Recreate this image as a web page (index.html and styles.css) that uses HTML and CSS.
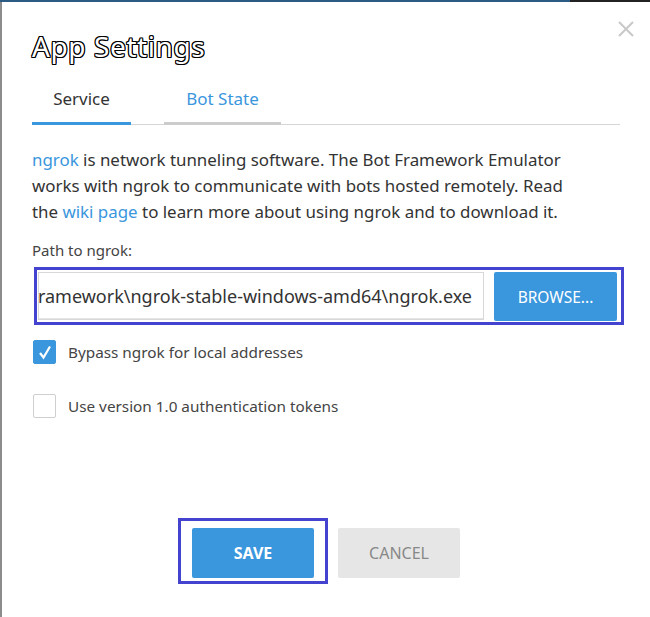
FILE: index.html
```html
<!DOCTYPE html>
<html lang="en">
<head>
    <meta charset="UTF-8">
    <meta name="viewport" content="width=device-width, initial-scale=1.0">
    <title>App Settings</title>
    <link rel="stylesheet" href="styles.css">
</head>
<body>
    <div class="topbar">
        <div class="topbar-blue"></div>
        <div class="topbar-dark"></div>
    </div>
    <div class="dialog">
        <button class="close" aria-label="Close">
            <svg width="16" height="16" viewBox="0 0 16 16">
                <path d="M1 1 L15 15 M15 1 L1 15" stroke="#c8c8c8" stroke-width="2" fill="none"/>
            </svg>
        </button>
        <h1 class="title">App Settings</h1>

        <div class="tabs">
            <div class="tab tab-active">Service</div>
            <div class="tab tab-inactive">Bot State</div>
        </div>

        <p class="intro">
            <a href="#">ngrok</a> is network tunneling software. The Bot Framework Emulator<br>
            works with ngrok to communicate with bots hosted remotely. Read<br>
            the <a href="#">wiki page</a> to learn more about using ngrok and to download it.
        </p>

        <label class="field-label">Path to ngrok:</label>
        <div class="path-row">
            <div class="path-input"><span>ramework\ngrok-stable-windows-amd64\ngrok.exe</span></div>
            <button class="btn btn-primary btn-browse">BROWSE...</button>
        </div>

        <div class="check-row">
            <span class="checkbox checked">
                <svg width="16" height="16" viewBox="0 0 16 16">
                    <path d="M3 9 L6.5 13.5 L13 2.5" stroke="#fff" stroke-width="2.2" fill="none"/>
                </svg>
            </span>
            <span class="check-label">Bypass ngrok for local addresses</span>
        </div>
        <div class="check-row">
            <span class="checkbox"></span>
            <span class="check-label">Use version 1.0 authentication tokens</span>
        </div>

        <div class="actions">
            <div class="focus-ring">
                <button class="btn btn-primary btn-save">SAVE</button>
            </div>
            <button class="btn btn-secondary">CANCEL</button>
        </div>
    </div>
</body>
</html>
```

FILE: styles.css
```css
body {
    margin: 0;
    padding: 0;
    background: #fff;
    font-family: "Noto Sans", "Open Sans", sans-serif;
    color: #333;
    width: 650px;
    height: 617px;
    overflow: hidden;
}

.topbar {
    display: flex;
    height: 2px;
}

.topbar-blue {
    width: 570px;
    background-color: #2b5a82;
}

.topbar-dark {
    flex: 1;
    background-color: #222;
}

.dialog {
    position: relative;
    height: 615px;
    border-left: 2px solid #8c8c8c;
    padding: 0 30px;
    box-sizing: border-box;
}

.close {
    position: absolute;
    top: 19px;
    right: 16px;
    background: none;
    border: none;
    padding: 0;
    width: 16px;
    height: 16px;
}

.title {
    margin: 0;
    padding-top: 26px;
    font-size: 28px;
    line-height: 36px;
    font-weight: normal;
    letter-spacing: 0.6px;
    color: #fff;
    text-shadow: -1px 0 #000, 1px 0 #000, 0 -1px #000, 0 1px #000,
        -1px -1px #000, 1px 1px #000, 1px -1px #000, -1px 1px #000;
}

.tabs {
    display: flex;
    margin-top: 14px;
    border-bottom: 1px solid #d6d6d6;
    width: 588px;
    gap: 33px;
}

.tab {
    font-size: 17px;
    line-height: 24px;
    padding: 9px 0 11px;
    text-align: center;
    border-bottom: 3px solid transparent;
    margin-bottom: -1px;
}

.tab-active {
    width: 99px;
    color: #333;
    border-bottom-color: #3a96dd;
}

.tab-inactive {
    width: 117px;
    color: #3a96dd;
    border-bottom-color: #cccccc;
}

.intro {
    margin: 22px 0 0;
    font-size: 16.9px;
    line-height: 26px;
    width: 592px;
    white-space: nowrap;
}

.intro a {
    color: #3a96dd;
    text-decoration: none;
}

.field-label {
    display: block;
    margin-top: 15px;
    font-size: 15px;
    line-height: 20px;
    color: #444;
}

.path-row {
    display: flex;
    gap: 10px;
    margin: 7px 0 0 2px;
    width: 579px;
    padding: 2px 4px 1px 1px;
    border: 3px solid #4343cf;
}

.path-input {
    width: 446px;
    height: 48px;
    border: 1px solid #d8d8d8;
    box-shadow: inset 0 -1px 0 #e4e4e4;
    box-sizing: border-box;
    overflow: hidden;
    white-space: nowrap;
    display: flex;
    align-items: center;
    justify-content: flex-end;
    padding-right: 11px;
    font-size: 18px;
    color: #333;
}

.btn {
    font-family: "Noto Sans", "Open Sans", sans-serif;
    border: none;
    border-radius: 2px;
    cursor: pointer;
    font-size: 15px;
}

.btn-primary {
    background-color: #3a96dd;
    color: #fff;
}

.btn-browse {
    width: 123px;
    height: 49px;
    font-size: 15.5px;
}

.check-row {
    display: flex;
    align-items: center;
    gap: 12px;
    margin-top: 15px;
    margin-left: 1px;
}

.check-row + .check-row {
    margin-top: 30px;
}

.checkbox {
    width: 23px;
    height: 24px;
    box-sizing: border-box;
    border: 1px solid #cfcfcf;
    border-radius: 2px;
    display: flex;
    align-items: center;
    justify-content: center;
}

.checkbox.checked {
    background-color: #3a96dd;
    border-color: #3a96dd;
}

.check-label {
    font-size: 15.3px;
    color: #444;
}

.actions {
    display: flex;
    align-items: center;
    gap: 10px;
    margin-top: 100px;
    margin-left: 146px;
}

.focus-ring {
    border: 3px solid #4343cf;
    padding: 7px 11px 3px;
}

.btn-save {
    width: 122px;
    height: 50px;
    font-weight: bold;
    font-size: 16px;
}

.btn-secondary {
    width: 122px;
    height: 50px;
    margin-top: 4px;
    background-color: #e6e6e6;
    color: #888;
    font-size: 16px;
}
```
